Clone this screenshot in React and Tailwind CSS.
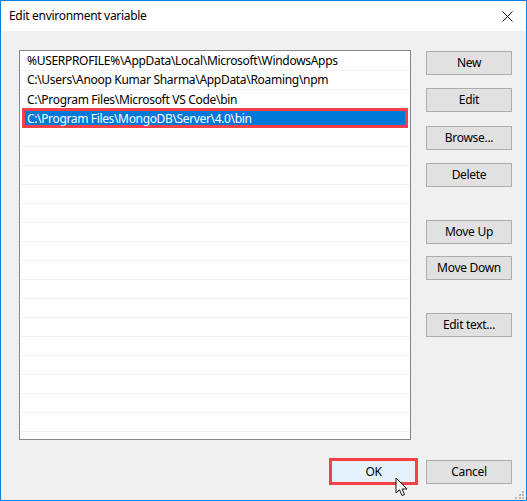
const font = { fontFamily: '"Noto Sans", "Open Sans", sans-serif' };

const paths = [
  ["%USERPROFILE%\\AppData\\Local\\Microsoft\\WindowsApps", "h-[20px] pt-px"],
  ["C:\\Users\\Anoop Kumar Sharma\\AppData\\Roaming\\npm", "h-[19px]"],
  ["C:\\Program Files\\Microsoft VS Code\\bin", "h-[18px] border-b-0 pt-px"],
];

function Btn({ children, className = "" }) {
  return (
    <div className={"h-6 w-[86px] shrink-0 flex items-center justify-center text-[12px] leading-none text-black tracking-[-0.3px] " + className}>
      {children}
    </div>
  );
}

const plain = "border border-[#adadad] bg-[#e1e1e1] ";

function Row({ children, className = "h-[19px]" }) {
  return (
    <div className={"shrink-0 mx-px border-b border-[#f0f0f0] pl-[6px] flex items-center text-[12px] leading-none text-black whitespace-nowrap tracking-[-0.3px] " + className}>
      {children}
    </div>
  );
}

export default function App() {
  return (
    <div style={font} className="relative w-[527px] h-[501px] border border-[#0a7fdc] bg-[#f0f0f0] flex flex-col overflow-hidden">
      <div className="h-[30px] shrink-0 bg-white flex items-center justify-between pl-[8px] pr-[13px] text-[12px] text-black tracking-[-0.3px]">
        <span>Edit environment variable</span>
        <svg width="11" height="11" viewBox="0 0 11 11" fill="none" stroke="#111" strokeWidth="1"><path d="M0.5 0.5 L10.5 10.5 M10.5 0.5 L0.5 10.5" /></svg>
      </div>
      <div className="flex-1 flex flex-col pl-[18px] pr-[14px] pt-[19px]">
        <div className="flex justify-between">
          <div className="w-[392px] h-[390px] border border-[#828790] bg-white flex flex-col overflow-hidden">
            {paths.map(([p, c]) => <Row key={p} className={c}>{p}</Row>)}
            <div className="h-[20px] shrink-0 mx-[2px] border-[3px] border-[#f44147] bg-[#0078d7] text-white text-[12px] leading-none whitespace-nowrap pl-[2px] pt-px flex items-center tracking-[-0.35px]">
              C:\Program Files\MongoDB\Server\4.0\bin
            </div>
            {Array.from({ length: 16 }).map((_, i) => <Row key={i}>&nbsp;</Row>)}
          </div>
          <div className="flex flex-col pt-px">
            <Btn className={plain}>New</Btn>
            <Btn className={plain + "mt-[13px]"}>Edit</Btn>
            <Btn className={plain + "mt-[14px]"}>Browse...</Btn>
            <Btn className={plain + "mt-[13px]"}>Delete</Btn>
            <Btn className={plain + "mt-[33px]"}>Move Up</Btn>
            <Btn className={plain + "mt-[12px]"}>Move Down</Btn>
            <Btn className={plain + "mt-[33px]"}>Edit text...</Btn>
          </div>
        </div>
        <div className="flex justify-end gap-[8px] mt-[20px]">
          <Btn className="bg-[#e5f1fb] border-[3px] border-[#f44147] h-[27px] w-[89px] -mt-[2px]">OK</Btn>
          <Btn className={plain}>Cancel</Btn>
        </div>
      </div>
      <svg className="absolute left-[394px] top-[476px]" width="14" height="21" viewBox="0 0 14 21">
        <path d="M1 1 L1 16 L4.5 12.8 L7 18.5 L9.5 17.5 L7 12 L12 12 Z" fill="#fff" stroke="#111" strokeWidth="1" />
      </svg>
      <svg className="absolute left-[514px] top-[490px]" width="10" height="8" viewBox="0 0 10 8" fill="#b5b5b5">
        <rect x="7" y="0" width="2" height="2" /><rect x="4" y="3" width="2" height="2" /><rect x="7" y="3" width="2" height="2" /><rect x="0" y="6" width="2" height="2" /><rect x="4" y="6" width="2" height="2" /><rect x="7" y="6" width="2" height="2" />
      </svg>
    </div>
  );
}
